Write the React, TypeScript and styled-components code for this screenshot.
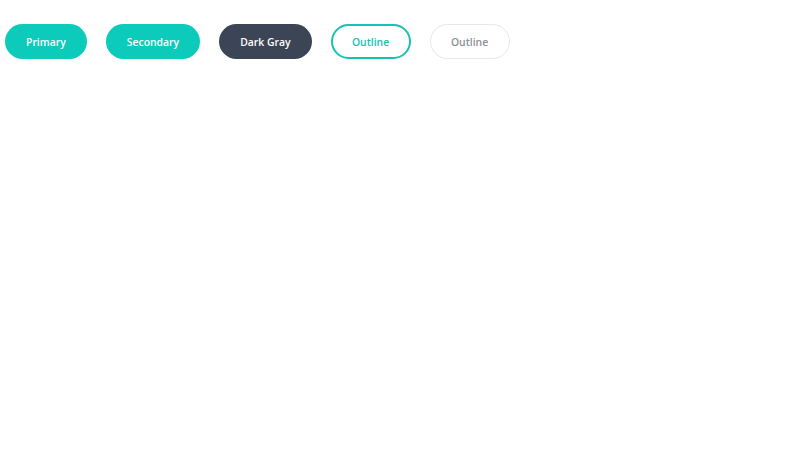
import React from "react";
import styled, { createGlobalStyle } from "styled-components";

const GlobalStyle = createGlobalStyle`
  body {
    margin: 0;
    background: #ffffff;
    font-family: "Open Sans", "Liberation Sans", sans-serif;
  }
`;

type Variant = "primary" | "secondary" | "dark" | "outline" | "outlineGray";

const variants: Record<
  Variant,
  { bg: string; color: string; border: string; width: number }
> = {
  primary: { bg: "#0ccbbb", color: "#ffffff", border: "#0ccbbb", width: 0 },
  secondary: { bg: "#0ccbbb", color: "#ffffff", border: "#0ccbbb", width: 0 },
  dark: { bg: "#3c4555", color: "#ffffff", border: "#3c4555", width: 0 },
  outline: { bg: "#ffffff", color: "#16bfae", border: "#16c2b1", width: 2 },
  outlineGray: { bg: "#ffffff", color: "#8a9099", border: "#e6e7e8", width: 1.5 },
};

const Row = styled.div`
  display: flex;
  align-items: center;
  gap: 19px;
  padding: 24px 5px;
`;

const Button = styled.button<{ $variant: Variant }>`
  box-sizing: border-box;
  height: 35px;
  padding: 0 ${(p) => 21 - variants[p.$variant].width}px;
  border-radius: 18px;
  border: ${(p) => variants[p.$variant].width}px solid
    ${(p) => variants[p.$variant].border};
  background: ${(p) => variants[p.$variant].bg};
  color: ${(p) => variants[p.$variant].color};
  font-family: "Open Sans", "Liberation Sans", sans-serif;
  font-weight: 600;
  font-size: 10.4px;
  cursor: pointer;
  min-width: ${(p) => (p.$variant.startsWith("outline") ? "80px" : "auto")};
`;

export default function App() {
  return (
    <>
      <GlobalStyle />
      <Row>
        <Button $variant="primary">Primary</Button>
        <Button $variant="secondary">Secondary</Button>
        <Button $variant="dark">Dark Gray</Button>
        <Button $variant="outline">Outline</Button>
        <Button $variant="outlineGray">Outline</Button>
      </Row>
    </>
  );
}
